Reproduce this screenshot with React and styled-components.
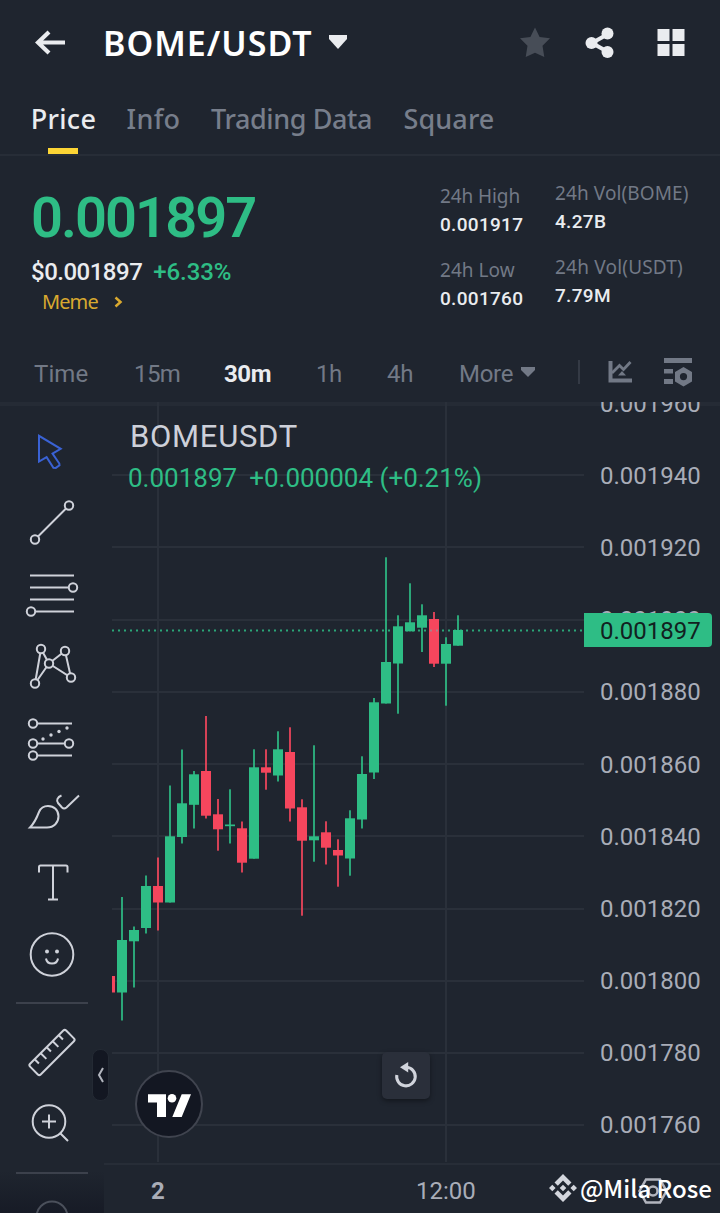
import React from "react";
import styled, { createGlobalStyle } from "styled-components";

const UP = "#2ebd85";
const DOWN = "#f6465d";
const PLEX = '"Noto Sans", "Open Sans", sans-serif';
const DIN = 'Roboto, "Liberation Sans", sans-serif';

const GlobalStyle = createGlobalStyle`
  *, *::before, *::after { box-sizing: border-box; }
  html, body { margin: 0; background: #1f252f; }
  body { width: 720px; height: 1213px; overflow: hidden; }
  svg { display: block; flex: none; }
`;

const Screen = styled.main`
  position: relative;
  display: flex;
  flex-direction: column;
  width: 720px;
  height: 1213px;
  overflow: hidden;
  background: #1f252f;
  color: #eaecef;
  font-family: ${PLEX};
`;

const Label = styled.span`
  font-family: ${(p) => p.$font || PLEX};
  font-size: ${(p) => p.$size}px;
  font-weight: ${(p) => p.$weight || 400};
  letter-spacing: ${(p) => p.$track || 0}px;
  line-height: ${(p) => p.$line || 30}px;
  color: ${(p) => p.$color || "#eaecef"};
  white-space: nowrap;
`;

/* ---------- header ---------- */

const Header = styled.header`
  display: flex;
  align-items: center;
  height: 86px;
  padding: 0 35px 0 35px;
`;

const PairButton = styled.div`
  display: flex;
  align-items: center;
  gap: 15px;
  width: 450px;
  margin-left: 37px;
`;

const HeaderActions = styled.div`
  display: flex;
  align-items: center;
  gap: 34px;
  margin-left: -3px;
`;

const GridIcon = styled.svg`
  margin-left: 8px;
`;

const Tabs = styled.nav`
  display: flex;
  height: 70px;
  padding: 16px 0 0 31px;
  gap: 31px;
  border-bottom: 2px solid #272d37;
`;

const Tab = styled.div`
  display: flex;
  flex-direction: column;
  align-items: center;
  gap: 12px;
  width: ${(p) => p.$width}px;
  height: 52px;

  &::after {
    content: "";
    flex: none;
    width: 30px;
    height: 6px;
    margin-right: 1px;
    background: ${(p) => (p.$active ? "#fcd535" : "transparent")};
  }
`;

/* ---------- market summary ---------- */

const Summary = styled.section`
  display: flex;
  height: 188px;
  padding: 26px 0 0 31px;
`;

const PriceBlock = styled.div`
  display: flex;
  flex-direction: column;
  width: 409px;
`;

const PriceLine = styled.div`
  display: flex;
  gap: 11px;
  margin-top: 3px;
`;

const TagLine = styled.div`
  display: flex;
  align-items: center;
  gap: 16px;
  margin: 0 0 0 11px;
`;

const StatColumn = styled.div`
  display: flex;
  flex-direction: column;
  gap: 18px;
  width: ${(p) => p.$width}px;
  margin-top: ${(p) => p.$top}px;
`;

const StatBox = styled.div`
  display: flex;
  flex-direction: column;
  height: 56px;
`;

/* ---------- interval bar ---------- */

const Intervals = styled.div`
  display: flex;
  align-items: center;
  height: 58px;
  padding: 1px 27px 0 34px;

  svg {
    margin-top: -3px;
  }
`;

const Interval = styled.div`
  display: flex;
  align-items: center;
  gap: 8px;
  width: ${(p) => p.$width}px;
`;

const Separator = styled.div`
  width: 2px;
  height: 24px;
  margin: -3px 28px 0 0;
  background: #343a45;
`;

/* ---------- chart ---------- */

const ChartArea = styled.section`
  position: relative;
  display: flex;
  height: 811px;
  border-top: 4px solid #252b35;
`;

const Tools = styled.aside`
  display: flex;
  flex-direction: column;
  width: 104px;
  height: 807px;
  padding-top: 10px;
  overflow: hidden;
  background: linear-gradient(to bottom, transparent 765px, #171b26 807px);
`;

const ToolDivider = styled.div`
  flex: none;
  height: 2px;
  margin: ${(p) => p.$top}px 16px ${(p) => p.$bottom}px;
  background: #3c414c;
`;

const Plot = styled.div`
  display: flex;
  flex-direction: column;
  width: 616px;
  margin-top: -4px;
`;

const PlotRow = styled.div`
  display: flex;
  height: 761px;
`;

const PriceAxis = styled.div`
  width: 136px;
  height: 761px;
  overflow: hidden;
`;

const Ticks = styled.div`
  display: flex;
  flex-direction: column;
  margin-top: -34.5px;
`;

const Tick = styled.div`
  flex: none;
  display: flex;
  align-items: center;
  height: 72.2px;
  padding-left: 16px;
`;

const TimeAxis = styled.div`
  display: flex;
  align-items: center;
  height: 50px;
  padding: 4px 0 0 47px;
  border-top: 2px solid #272d37;
`;

const TimeTick = styled.div`
  width: ${(p) => p.$width}px;
`;

const Overlay = styled.div`
  position: absolute;
  left: ${(p) => p.$x}px;
  top: ${(p) => p.$y}px;
`;

const Legend = styled(Overlay)`
  display: flex;
  flex-direction: column;
`;

const LegendValues = styled.div`
  display: flex;
  gap: 12px;
  margin: 4px 0 0 -2px;
`;

const PriceTag = styled(Overlay)`
  display: flex;
  align-items: center;
  width: 128px;
  height: 34px;
  padding: 2px 0 0 16px;
  border-radius: 0 4px 4px 0;
  background: ${UP};
`;

const Collapse = styled(Overlay)`
  display: flex;
  align-items: center;
  justify-content: center;
  width: 17px;
  height: 52px;
  border: 1px solid #242a34;
  border-radius: 8px;
  background: #131722;
`;

const Badge = styled(Overlay)`
  width: 68px;
  height: 68px;
  border: 2px solid #40444f;
  border-radius: 50%;
  background: #131722;
`;

const Reset = styled(Overlay)`
  width: 48px;
  height: 47px;
  border-radius: 5px;
  background: #2a2f3a;
  box-shadow: 0 2px 5px rgba(0, 0, 0, 0.4);
`;

const Watermark = styled(Overlay)`
  display: flex;
  align-items: center;
  gap: 3px;
`;

/* ---------- data ---------- */

const tabs = [
  ["Price", 65, 0.3],
  ["Info", 53, 0.3],
  ["Trading Data", 161, -0.4],
  ["Square", 92, 0.1],
];

const intervals = [
  ["Time", 100, 0.1],
  ["15m", 90, -0.6],
  ["30m", 92, -0.4],
  ["1h", 71, -0.4],
  ["4h", 72, -0.3],
];

const ticks = ["0.001960", "0.001940", "0.001920", "0.001900", "0.001880", "0.001860", "0.001840", "0.001820", "0.001800", "0.001780", "0.001760"];

// [centre, wick top, body top, body bottom, wick bottom, rising]
const candles = [
  [110, 976, 976, 992.5, 992.5, 0],
  [122, 897, 940, 992.5, 1020.5, 1],
  [134, 926.5, 930, 941.3, 987.5, 1],
  [146, 875.5, 886, 928, 933.5, 1],
  [158, 857.5, 886, 902.5, 930.5, 0],
  [170, 785.5, 836.3, 902.5, 902.5, 1],
  [182, 749.5, 803.3, 837, 843.5, 1],
  [194, 771, 774.3, 804.8, 828.5, 1],
  [206, 716, 771, 815.7, 818.5, 0],
  [218, 799, 814.3, 829.3, 850.7, 0],
  [230, 789.3, 824.5, 826.2, 843.5, 1],
  [242, 821.5, 828.3, 862.7, 872.5, 0],
  [254, 749.3, 767.3, 858.7, 858.7, 1],
  [266, 749.3, 767.3, 772.7, 789.7, 0],
  [278, 731.3, 749.3, 775.5, 781.5, 1],
  [290, 727.3, 752, 808.5, 821.5, 0],
  [302, 799.3, 807.3, 840.7, 915.7, 0],
  [314, 745.3, 836.3, 840.3, 861.7, 1],
  [326, 821.3, 832.3, 847.7, 864.5, 0],
  [338, 839.3, 850, 855.5, 886.7, 0],
  [350, 810.3, 818.3, 858.5, 875.7, 1],
  [362, 756.3, 774, 819.5, 828.5, 1],
  [374, 698, 702.3, 772.5, 779, 1],
  [386, 557.3, 662, 703.5, 703.5, 1],
  [398, 615.3, 626.3, 663.5, 713.7, 1],
  [410, 583.3, 622.3, 631.3, 631.3, 1],
  [422, 604.3, 615.3, 627.7, 652, 1],
  [434, 612, 619, 663.7, 667, 0],
  [446, 637.3, 644, 663.7, 705.7, 1],
  [458, 615.3, 630, 645.7, 645.7, 1],
];

function Candles() {
  return (
    <svg width="480" height="761" viewBox="104 402 480 761">
      <defs>
        <clipPath id="pane">
          <rect x="112" y="402" width="472" height="761" />
        </clipPath>
      </defs>
      <g fill="#2a303a">
        {ticks.slice(1).map((t, i) => (
          <rect key={t} x="112" y={474 + Math.round(i * 72.25)} width="472" height="2" />
        ))}
        <rect x="157" y="402" width="2" height="760" />
        <rect x="445" y="402" width="2" height="760" />
      </g>
      <path d="M112 630.5H584" stroke={UP} strokeWidth="2" strokeDasharray="2 4" opacity="0.85" />
      <g clipPath="url(#pane)">
        {candles.map(([x, hi, top, bottom, lo, up]) => (
          <g key={x} fill={up ? UP : DOWN}>
            <rect x={x - 1} y={hi} width="2" height={lo - hi} opacity="0.85" />
            <rect x={x - 5} y={top} width="10" height={bottom - top} />
          </g>
        ))}
      </g>
      <path d="M430 630.5h9" stroke="#a8808a" strokeWidth="2" strokeDasharray="2 4" />
    </svg>
  );
}

function Tool({ children, color = "#cfd2da" }) {
  return (
    <svg width="104" height="72" viewBox="0 0 104 72" fill="none" stroke={color} strokeWidth="2">
      {children}
    </svg>
  );
}

const Ring = ({ x, y }) => <circle cx={x} cy={y} r="4.2" fill="#1f252f" />;

function DrawingTools() {
  return (
    <Tools>
      <Tool color="#3a62d4">
        <path d="M39 19.8v25.7l7.6-4.4 6.8 10.6 2.4.2 3.7-2.6-.2-1.8-6.8-9.9 8.2-4.8Z" />
      </Tool>
      <Tool>
        <path d="M35 51.5l34-34" />
        <Ring x={35} y={51.5} />
        <Ring x={69} y={17.5} />
      </Tool>
      <Tool>
        <path d="M30 15.5h44M30 27.5h43M30 39.5h44M31 51.5h43" />
        <Ring x={73} y={27.5} />
        <Ring x={31} y={51.5} />
      </Tool>
      <Tool>
        <path d="M35 51.5l6-34.5 8 14.5-14 20M49 31.5L65 19l6 26.5-22-14" />
        <Ring x={41} y={17} />
        <Ring x={65} y={19} />
        <Ring x={49} y={31.5} />
        <Ring x={35} y={51.5} />
        <Ring x={71} y={45.5} />
      </Tool>
      <Tool>
        <path d="M33 19.5h39M33 39.5h36M33 51.5h39" />
        <Ring x={33} y={19.5} />
        <Ring x={33} y={39.5} />
        <Ring x={69} y={39.5} />
        <Ring x={33} y={51.5} />
        <g fill="#cfd2da" stroke="none">
          <circle cx="43" cy="35" r="1.7" />
          <circle cx="51" cy="31" r="1.7" />
          <circle cx="59" cy="27.5" r="1.7" />
          <circle cx="67" cy="24" r="1.7" />
        </g>
      </Tool>
      <Tool>
        <path d="M30 51.5H47c7 0 11.5-5 11.5-11.2C58.5 34 54 30 48 30c-4.5 0-7.5 2.3-9 6-2.3 6-5 11.5-9 15.5Z" />
        <path d="M61.5 19.5c-4 1.500-5.500 5-3.500 7.500l4 4.500c1.300 1.300 3 1.200 4.500-.1L79 19.500" />
      </Tool>
      <Tool>
        <path d="M39 24.5v-5.500q0-1.500 1.500-1.500H66q1.500 0 1.500 1.500v5.500M53 17.500v34M48 51.500h10" />
      </Tool>
      <Tool>
        <circle cx="52" cy="34.5" r="21.3" />
        <path d="M46 38.500c.5 3.500 2.800 5 6 5s5.500-1.500 6-5" />
        <g fill="#cfd2da" stroke="none">
          <circle cx="47" cy="31.5" r="2" />
          <circle cx="57" cy="31.5" r="2" />
        </g>
      </Tool>
      <ToolDivider $top={10} $bottom={12} />
      <Tool>
        <g transform="translate(52 36.500) rotate(-45)">
          <rect x="-25.5" y="-7.5" width="51" height="15" rx="2" />
          <path d="M-17-7.500v6M-8.500-7.500v8M0-7.500v6M8.500-7.500v8M17-7.500v6" />
        </g>
      </Tool>
      <Tool>
        <circle cx="49" cy="33.5" r="16.3" />
        <path d="M42 33.500h14M49 26.500v14M60.500 45.500l7.500 7.500" />
      </Tool>
      <ToolDivider $top={12} $bottom={8} />
      <Tool color="#4b505b">
        <circle cx="52" cy="35" r="15.5" />
      </Tool>
    </Tools>
  );
}

function Stat({ label, value, track }) {
  return (
    <StatBox>
      <Label $size={19} $color="#727986" $track={track} $line={28}>{label}</Label>
      <Label $font={DIN} $size={19} $weight={500} $track={0.3} $line={30}>{value}</Label>
    </StatBox>
  );
}

export default function App() {
  return (
    <>
      <GlobalStyle />
      <Screen>
        <Header>
          <svg width="31" height="26" viewBox="0 0 31 26" fill="none" stroke="#eaecef" strokeWidth="4.2">
            <path d="M30 12.500H4M14 2L3 12.500l11 10.500" />
          </svg>
          <PairButton>
            <Label $size={34} $weight={600} $track={1} $line={38} $color="#fff">BOME/USDT</Label>
            <svg width="20" height="18" viewBox="0 0 20 18" fill="#eaecef">
              <path d="M1 1h18v4L10 15 1 5Z" />
            </svg>
          </PairButton>
          <HeaderActions>
            <svg width="32" height="32" viewBox="0 0 32 32" fill="#474d57">
              <path d="M16 .5l4.600 9.400 10.400 1.400-7.500 7.400 1.800 11.300L16 25.700l-9.300 4.300 1.800-11.300L1 11.300l10.400-1.400Z" />
            </svg>
            <svg width="30" height="33" viewBox="0 0 30 33" fill="#eaecef">
              <path d="M23 7L7 16l16 9" fill="none" stroke="#eaecef" strokeWidth="4" />
              <circle cx="22.500" cy="6.500" r="6" />
              <circle cx="6.500" cy="16" r="6" />
              <circle cx="22.500" cy="25" r="6" />
            </svg>
            <GridIcon width="28" height="28" viewBox="0 0 28 28" fill="#eaecef">
              <path d="M.5 0h12v12H.5zM15.500 0h12v12h-12zM.5 15h12v12H.5zM15.500 15h12v12h-12z" />
            </GridIcon>
          </HeaderActions>
        </Header>

        <Tabs>
          {tabs.map(([name, width, track], i) => (
            <Tab key={name} $width={width} $active={i === 0}>
              <Label $size={27} $weight={500} $track={track} $line={34} $color={i === 0 ? "#eaecef" : "#777e8b"}>
                {name}
              </Label>
            </Tab>
          ))}
        </Tabs>

        <Summary>
          <PriceBlock>
            <Label $font={DIN} $size={56} $weight={600} $track={-1.95} $line={72} $color={UP}>0.001897</Label>
            <PriceLine>
              <Label $font={DIN} $size={24} $weight={500} $track={-0.5}>$0.001897</Label>
              <Label $font={DIN} $size={24} $weight={500} $track={-0.1} $color={UP}>+6.33%</Label>
            </PriceLine>
            <TagLine>
              <Label $size={20} $track={-0.9} $color="#d9a92f">Meme</Label>
              <svg width="9" height="12" viewBox="0 0 9 12" fill="none" stroke="#d9a92f" strokeWidth="2.5">
                <path d="M1.500 1.500L6.500 6l-5 4.500" />
              </svg>
            </TagLine>
          </PriceBlock>
          <StatColumn $width={115} $top={0}>
            <Stat label="24h High" value="0.001917" track={-0.1} />
            <Stat label="24h Low" value="0.001760" track={0.05} />
          </StatColumn>
          <StatColumn $width={150} $top={-3}>
            <Stat label="24h Vol(BOME)" value="4.27B" track={0.1} />
            <Stat label="24h Vol(USDT)" value="7.79M" track={0.2} />
          </StatColumn>
        </Summary>

        <Intervals>
          {intervals.map(([name, width, track]) => (
            <Interval key={name} $width={width}>
              <Label
                $font={DIN}
                $size={24}
                $weight={name === "30m" ? 700 : 400}
                $track={track}
                $color={name === "30m" ? "#eaecef" : "#727986"}
              >
                {name}
              </Label>
            </Interval>
          ))}
          <Interval $width={119}>
            <Label $font={DIN} $size={24} $track={-0.3} $color="#727986">More</Label>
            <svg width="14" height="11" viewBox="0 0 14 11" fill="#727986">
              <path d="M0 0h14v3L7 10 0 3Z" />
            </svg>
          </Interval>
          <Separator />
          <svg width="56" height="28" viewBox="0 0 56 28" fill="none" stroke="#727986">
            <path d="M2.500 3v19.500H24" strokeWidth="4" />
            <path d="M4 15l7.500-7.500 4 4L22.500 4" strokeWidth="2.8" />
            <path d="M10 17.500l4-4.500 4 4.500Z" fill="#727986" stroke="none" />
          </svg>
          <svg width="28" height="30" viewBox="0 0 28 30" fill="#727986">
            <path d="M0 1h28v5H0zM0 12h9v4.500H0zM0 22h9v5H0z" />
            <path fillRule="evenodd" d="M19.500 10l8.500 5v9.500l-8.500 5-8.500-5V15Zm0 6a3.600 3.600 0 100 7.200 3.600 3.600 0 000-7.200Z" />
          </svg>
        </Intervals>

        <ChartArea>
          <DrawingTools />
          <Plot>
            <PlotRow>
              <Candles />
              <PriceAxis>
                <Ticks>
                  {ticks.map((t) => (
                    <Tick key={t}>
                      <Label $font={DIN} $size={24} $color="#a9adb8">{t}</Label>
                    </Tick>
                  ))}
                </Ticks>
              </PriceAxis>
            </PlotRow>
            <TimeAxis>
              <TimeTick $width={265}>
                <Label $font={DIN} $size={24} $weight={700} $color="#a9adb8">2</Label>
              </TimeTick>
              <TimeTick $width={120}>
                <Label $font={DIN} $size={24} $color="#a9adb8">12:00</Label>
              </TimeTick>
            </TimeAxis>
          </Plot>

          <Legend $x={130} $y={12}>
            <Label $font={DIN} $size={31} $track={0.7} $line={38} $color="#cdd0d9">BOMEUSDT</Label>
            <LegendValues>
              <Label $font={DIN} $size={26} $line={36} $color={UP}>0.001897</Label>
              <Label $font={DIN} $size={26} $line={36} $color={UP}>+0.000004 (+0.21%)</Label>
            </LegendValues>
          </Legend>
          <PriceTag $x={584} $y={207}>
            <Label $font={DIN} $size={24} $color="#12211f">0.001897</Label>
          </PriceTag>
          <Collapse $x={92} $y={643}>
            <svg width="8" height="16" viewBox="0 0 8 16" fill="none" stroke="#b2b5be" strokeWidth="2">
              <path d="M6 1L2 8l4 7" />
            </svg>
          </Collapse>
          <Badge $x={135} $y={664}>
            <svg width="64" height="64" viewBox="137 1072 64 64" fill="#fff">
              <path d="M148 1094.300h18v22.700h-9v-14.500h-9zM181.700 1094.300h9.300l-9.300 22.700h-9.400z" />
              <circle cx="172" cy="1098.300" r="4.300" />
            </svg>
          </Badge>
          <Reset $x={382} $y={646}>
            <svg width="48" height="47" viewBox="382 1052 48 47" fill="none" stroke="#d1d4dc" strokeWidth="3">
              <path d="M396.800 1075a9.300 9.300 0 1 0 10-7.700" />
              <path d="M400 1067.300l8.200-5.300v10.500Z" fill="#d1d4dc" stroke="none" />
            </svg>
          </Reset>
          <Overlay $x={637} $y={771}>
            <svg width="32" height="28" viewBox="0 0 32 28" fill="none" stroke="#b2b5be" strokeWidth="2.5">
              <path d="M9 2.500h14L29.500 14 23 25.500H9L2.500 14Z" />
              <circle cx="16" cy="14" r="4.500" />
            </svg>
          </Overlay>
          <Watermark $x={549} $y={764}>
            <svg width="28" height="28" viewBox="0 0 28 28" fill="#d3d6dd">
              <path d="M14 0l8.500 8.500-3.300 3.300L14 6.600l-5.200 5.200-3.300-3.300ZM14 28l8.500-8.500-3.300-3.300-5.200 5.200-5.200-5.200-3.300 3.300ZM3.300 10.700L6.600 14l-3.300 3.300L0 14ZM24.700 10.700L28 14l-3.300 3.300-3.300-3.300ZM14 10.700l3.300 3.300-3.300 3.300-3.300-3.300Z" />
            </svg>
            <Label $font={'"Noto Sans CJK SC", "Noto Sans", sans-serif'} $size={24} $weight={500} $line={36} $color="#fff">@Mila Rose</Label>
          </Watermark>
        </ChartArea>
      </Screen>
    </>
  );
}
